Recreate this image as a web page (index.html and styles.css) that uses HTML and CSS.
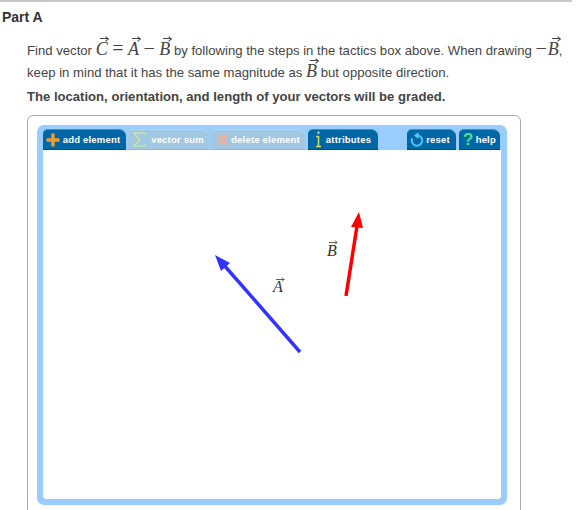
FILE: index.html
```html
<!DOCTYPE html>
<html lang="en">
<head>
  <meta charset="UTF-8">
  <title>Part A</title>
  <link rel="stylesheet" href="styles.css">
</head>
<body>
  <div class="page">
    <h2 class="part-title">Part A</h2>

    <div class="question">
      <p class="prompt line-one">Find vector <span class="vec math">C<i class="arrow"></i></span><span class="math op">=</span><span class="vec math">A<i class="arrow"></i></span><span class="math op">&minus;</span><span class="vec math">B<i class="arrow"></i></span> by following the steps in the tactics box above. When drawing <span class="math op neg">&minus;</span><span class="vec math">B<i class="arrow"></i></span>,</p>
      <p class="prompt line-two">keep in mind that it has the same magnitude as <span class="vec math">B<i class="arrow"></i></span> but opposite direction.</p>
      <p class="graded">The location, orientation, and length of your vectors will be graded.</p>

      <div class="tool-box">
        <div class="tool-panel">
          <div class="toolbar">
            <button class="tool tool-add">
              <svg class="icon" width="14" height="14" viewBox="0 0 14 14"><path d="M7 0.500v13M0.500 7h13" stroke="#f39a2b" stroke-width="3.4" fill="none"/></svg>
              add element
            </button>
            <button class="tool tool-sum off">
              <svg class="icon" width="13" height="15" viewBox="0 0 13 15"><path d="M12 2.500V1H1l5.500 6.500L1 14h11v-1.500" stroke="#dcef7c" stroke-width="1.100" fill="none"/></svg>
              vector sum
            </button>
            <button class="tool tool-del off">
              <svg class="icon" width="13" height="13" viewBox="0 0 13 13"><path d="M1.500 1.500l10 10M11.500 1.500l-10 10" stroke="#f3ad98" stroke-width="2.400" fill="none"/></svg>
              delete element
            </button>
            <button class="tool tool-attr">
              <svg class="icon" width="7" height="17" viewBox="0 0 7 17"><path d="M3.500 0.500v2.400" stroke="#d6dc5c" stroke-width="2" fill="none"/><path d="M3.500 5v10.500M1 5.500h2.500M1 15.500h5" stroke="#d6dc5c" stroke-width="1.600" fill="none"/></svg>
              attributes
            </button>
            <button class="tool tool-reset">
              <svg class="icon" width="14" height="15" viewBox="0 0 14 15"><path d="M2.200 6.500a5.200 5.200 0 1 0 8.200-2L8 3.500" stroke="#52c8ee" stroke-width="2" fill="none"/><path d="M8.500 0L4 3.500L8.500 7Z" fill="#52c8ee"/></svg>
              reset
            </button>
            <button class="tool tool-help">
              <span class="help-mark">?</span>
              help
            </button>
          </div>

          <div class="canvas">
            <svg class="vectors" width="459" height="350" viewBox="0 0 459 350">
              <path d="M257 202L180 114" stroke="#3333ff" stroke-width="3.500" fill="none"/>
              <path d="M172 105L187 113L178 121Z" fill="#3333ff"/>
              <path d="M303 146L314 76" stroke="#ff0000" stroke-width="3.500" fill="none"/>
              <path d="M316 62L320 78L308 77Z" fill="#ff0000"/>
              <text class="vec-label" x="230" y="142">A</text>
              <path class="vec-tick" d="M233 129.500h8M239 127.500l2 2-2 2"/>
              <text class="vec-label" x="284" y="106">B</text>
              <path class="vec-tick" d="M286 92.500h8M292 90.500l2 2-2 2"/>
            </svg>
          </div>
        </div>
      </div>
    </div>
  </div>
</body>
</html>
```

FILE: styles.css
```css
html, body {
  height: 510px;
  margin: 0;
  overflow: hidden;
  background: #ffffff;
}

body {
  font-family: "Liberation Sans", Arial, sans-serif;
  color: #444444;
}

.page {
  width: 572px;
  border-top: 2px solid #c8c8c8;
}

.part-title {
  margin: 8px 0 0 2px;
  font-size: 14px;
  line-height: 15px;
  font-weight: bold;
  color: #333333;
}

.question {
  padding-left: 27px;
}

.prompt {
  margin: 0;
  font-size: 13.15px;
  line-height: 22px;
  white-space: nowrap;
}

.line-one {
  margin-top: 15px;
  height: 22px;
}

.line-two {
  height: 22px;
}

.graded {
  margin: 5px 0 0;
  font-size: 13.1px;
  line-height: 16px;
  font-weight: bold;
  color: #444444;
  white-space: nowrap;
}

.math {
  font-family: "Liberation Serif", "Times New Roman", serif;
  font-size: 18px;
  color: #444444;
}

.vec {
  position: relative;
  display: inline-block;
  font-style: italic;
  line-height: 16px;
}

.op {
  margin: 0 4.5px;
  font-size: 20px;
  line-height: 16px;
  font-style: normal;
}

.neg {
  margin: 0 1px 0 0;
}

.arrow {
  position: absolute;
  left: 4px;
  top: -3px;
  width: 8px;
  height: 1px;
  background: #444444;
}

.arrow::after {
  content: "";
  position: absolute;
  right: 0;
  top: -1px;
  width: 3px;
  height: 3px;
  border-top: 1px solid #444444;
  border-right: 1px solid #444444;
  transform: rotate(45deg);
}

.tool-box {
  width: 470px;
  height: 420px;
  margin-top: 10px;
  padding: 9px 13px 0 9px;
  border: 1px solid #aaaaaa;
  border-radius: 6px;
}

.tool-panel {
  width: 470px;
  height: 380px;
  box-sizing: border-box;
  padding: 4px 5px 5px 6px;
  background: #99ccff;
  border-radius: 7px;
}

.toolbar {
  display: flex;
  height: 21px;
}

.tool {
  display: flex;
  align-items: center;
  justify-content: center;
  gap: 3px;
  height: 21px;
  padding: 0;
  border: none;
  border-top: 1px solid #3d8fc4;
  border-bottom: 1px solid #004f80;
  border-radius: 5px 7px 0 0;
  background: #0067a6;
  color: #ffffff;
  font-family: "Liberation Sans", Arial, sans-serif;
  font-size: 9.5px;
  font-weight: bold;
  letter-spacing: 0.2px;
  white-space: nowrap;
}

.tool.off {
  background: #a0c8e2;
  border-top-color: #b6d8ec;
  border-bottom-color: #8db9d6;
  color: #ffffff;
}

.tool-add { width: 83px; margin-right: 2px; gap: 3px; padding-right: 3px; }
.tool-sum { width: 81px; margin-right: 2px; gap: 5px; }
.tool-del { width: 94px; margin-right: 3px; gap: 2px; }
.tool-attr { width: 70px; margin-right: 29px; gap: 4px; }
.tool-reset { width: 49px; margin-right: 3px; gap: 2px; padding-right: 3px; }
.tool-help { width: 41px; gap: 2px; }

.help-mark {
  color: #4fe08a;
  font-size: 17px;
  line-height: 15px;
}

.canvas {
  width: 459px;
  height: 350px;
  background: #ffffff;
  border-right: 1px solid #c4c4c4;
  border-bottom: 1px solid #c4c4c4;
  box-sizing: border-box;
  border-radius: 0 0 4px 4px;
  overflow: hidden;
}

.vectors {
  display: block;
}

.vec-label {
  font-family: "Liberation Serif", "Times New Roman", serif;
  font-size: 16px;
  font-style: italic;
  fill: #333333;
}

.vec-tick {
  fill: none;
  stroke: #333333;
  stroke-width: 0.8;
}
```
